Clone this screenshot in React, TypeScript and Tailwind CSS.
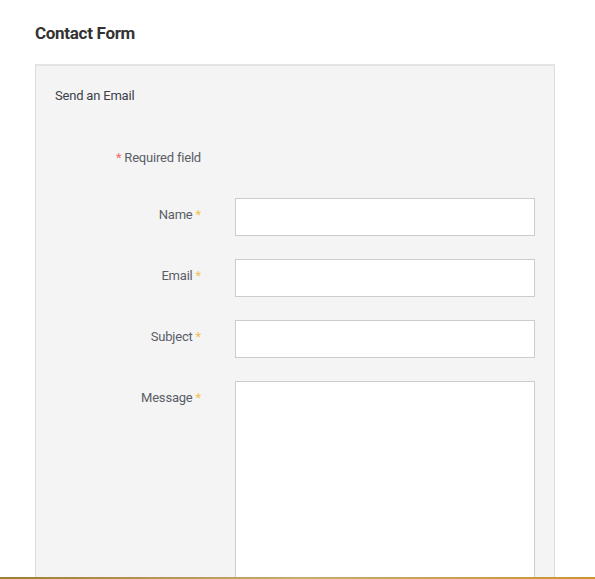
import React from 'react';

const fields = [
  { label: 'Name', type: 'input' },
  { label: 'Email', type: 'input' },
  { label: 'Subject', type: 'input' },
  { label: 'Message', type: 'textarea' },
];

const App: React.FC = () => {
  return (
    <div className="relative h-[579px] w-full overflow-hidden bg-white" style={{ fontFamily: 'Roboto, "Liberation Sans", sans-serif' }}>
      <div className="px-[35px] pt-[23px]">
        <h2 className="text-[17px] font-bold leading-5 tracking-[-0.3px] text-[#333]">Contact Form</h2>

        {/* Form panel */}
        <div className="mt-[21px] w-[520px] border border-[#ddd] border-t-2 border-t-[#e4e4e4] bg-[#f4f4f4] px-[19px] pt-[22px] pb-10">
          <p className="text-[13px] leading-4 tracking-[-0.2px] text-[#3d4048]">Send an Email</p>

          <div className="mt-[46px] flex gap-[34px]">
            <p className="w-[146px] text-right text-[13px] leading-4 tracking-[-0.2px] text-[#5a5e68]">
              <span className="text-[#f26b6b]">*</span> Required field
            </p>
          </div>

          <div className="mt-[32px] flex flex-col gap-[23px]">
            {fields.map(f => (
              <div key={f.label} className="flex gap-[34px]">
                <label className="w-[146px] pt-[9px] text-right text-[13px] leading-4 tracking-[-0.2px] text-[#5a5e68]">
                  {f.label} <span className="text-[#f2c14e]">*</span>
                </label>
                {f.type === 'input' ? (
                  <input className="h-[38px] w-[300px] border border-[#ccc] bg-white outline-none" />
                ) : (
                  <textarea className="h-[230px] w-[300px] resize-none border border-[#ccc] bg-white outline-none" />
                )}
              </div>
            ))}
          </div>
        </div>
      </div>

      {/* Bottom accent strip */}
      <div className="absolute bottom-0 left-0 h-[2px] w-full bg-gradient-to-r from-[#a07c34] via-[#c8ab70] to-[#c9962e]" />
    </div>
  );
};

export default App;
